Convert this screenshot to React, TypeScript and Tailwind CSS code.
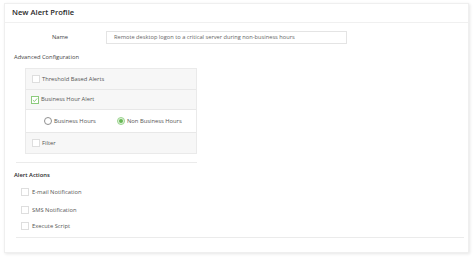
import React from 'react';

const font = { fontFamily: '"Open Sans", "Liberation Sans", sans-serif' };

const Box = ({ checked = false }: { checked?: boolean }) => (
  <span
    className={`w-[8px] h-[8px] shrink-0 bg-white border flex items-center justify-center ${
      checked ? 'border-[#8ccb7c]' : 'border-[#dedede]'
    }`}
  >
    {checked && (
      <svg width="6" height="6" viewBox="0 0 10 10" fill="none">
        <path d="M1.5 5.2 L4 7.6 L8.6 2.4" stroke="#6ab659" strokeWidth="1.3" />
      </svg>
    )}
  </span>
);

const Radio = ({ on = false }: { on?: boolean }) => (
  <span
    className={`w-[8px] h-[8px] rounded-full shrink-0 border flex items-center justify-center ${
      on ? 'border-[#9bd48e] bg-[#e3f3df]' : 'border-[#909090] bg-white'
    }`}
  >
    {on && <span className="w-[4px] h-[4px] rounded-full bg-[#66b854]" />}
  </span>
);

export default function App() {
  return (
    <div className="w-[474px] h-[267px] bg-white pt-[3px] pl-[4px] text-[#555]" style={font}>
      <div className="w-[465px] h-[250px] bg-white border border-[#efefef] shadow-[1px_1px_3px_rgba(0,0,0,0.1)] flex flex-col">
        <div className="h-[19px] border-b border-[#f0f0f0] flex items-center pl-[7px]">
          <span className="text-[7.6px] font-semibold text-[#2a2a2a] leading-none">New Alert Profile</span>
        </div>

        <div className="flex flex-col pl-[9px]">
          <div className="flex items-center mt-[8px] h-[13px]">
            <span className="w-[92px] text-center text-[5.8px] text-[#444]">Name</span>
            <div className="w-[241px] h-[13px] border border-[#e4e4e4] flex items-center pl-[7px] text-[5.7px] text-[#666]">
              Remote desktop logon to a critical server during non-business hours
            </div>
          </div>

          <div className="mt-[9px] h-[8px] flex items-center text-[5.8px] text-[#444]">Advanced Configuration</div>

          <div className="mt-[7px] ml-[11px] w-[172px] border border-[#eaeaea] flex flex-col text-[5.8px] text-[#555]">
            <div className="h-[20px] bg-[#f7f7f7] flex items-center gap-[2px] pl-[6px]">
              <Box />
              <span>Threshold Based Alerts</span>
            </div>
            <div className="h-[20px] bg-[#f7f7f7] border-t border-[#e8e8e8] flex items-center gap-[2px] pl-[5px]">
              <Box checked />
              <span>Business Hour Alert</span>
            </div>
            <div className="h-[23px] bg-white border-t border-[#e8e8e8] flex items-center pl-[18px]">
              <div className="flex items-center gap-[2px] w-[73px]">
                <Radio />
                <span>Business Hours</span>
              </div>
              <div className="flex items-center gap-[2px]">
                <Radio on />
                <span>Non Business Hours</span>
              </div>
            </div>
            <div className="h-[21px] bg-[#f7f7f7] border-t border-[#e8e8e8] flex items-center gap-[2px] pl-[6px]">
              <Box />
              <span>Filter</span>
            </div>
          </div>

          <div className="mt-[8px] ml-[2px] w-[181px] h-px bg-[#ebebeb]" />

          <div className="mt-[8px] h-[8px] flex items-center text-[5.8px] font-semibold text-[#2a2a2a]">Alert Actions</div>

          <div className="mt-[8px] flex flex-col gap-[8px] pl-[7px] text-[5.8px] text-[#555]">
            <div className="h-[10px] flex items-center gap-[3px]">
              <Box />
              <span>E-mail Notification</span>
            </div>
            <div className="h-[10px] flex items-center gap-[3px]">
              <Box />
              <span>SMS Notification</span>
            </div>
          </div>
          <div className="mt-[6px] pl-[7px] h-[10px] flex items-center gap-[3px] text-[5.8px] text-[#555]">
            <Box />
            <span>Execute Script</span>
          </div>

          <div className="mt-[6px] ml-[2px] w-[448px] h-px bg-[#ebebeb]" />
        </div>
      </div>
    </div>
  );
}
